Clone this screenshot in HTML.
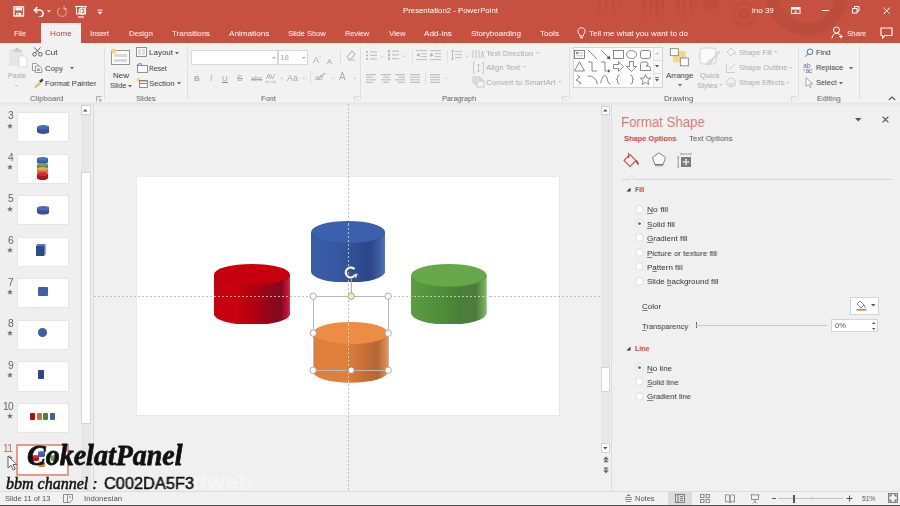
<!DOCTYPE html>
<html><head><meta charset="utf-8">
<style>
*{margin:0;padding:0;box-sizing:border-box}
html,body{width:900px;height:506px;overflow:hidden;background:#f0f0f0;font-family:"Liberation Sans",sans-serif}
.a{position:absolute}
.t{position:absolute;white-space:nowrap;will-change:transform;line-height:10px;font-size:8px;color:#444}
u{text-decoration-thickness:1px;text-underline-offset:1px;text-decoration-color:rgba(60,60,60,0.6)}
</style></head><body>

<div class="a" style="left:0;top:0;width:900px;height:43px;background:#c75140"></div>
<svg class="a" style="left:560px;top:0px;" width="340" height="43" viewBox="0 0 340 43">
<g fill="none" stroke="#000">
<circle cx="247" cy="-6" r="35" stroke-width="13" stroke-opacity="0.055"/>
<circle cx="184" cy="14" r="4" stroke-width="4" stroke-opacity="0.05"/>
<circle cx="184" cy="14" r="11" stroke-width="3" stroke-opacity="0.04"/>
</g>
<g fill="#000" fill-opacity="0.05">
<circle cx="151" cy="2" r="8"/>
<path d="M38 0 h3 l-1 20z M45 0 h2 l-0.5 16z M52 0 h3 l-1 22z M60 0 h2 l-0.6 14z"/>
<path d="M82 0 h4 l-1 26z M89 0 h3 l-1 22z M95 0 h4 l-1.5 24z M101 0 h3 l-1 18z"/>
<path d="M116 0 h4 l-1 20z M123 0 h3 l-1 24z M129 0 h4 l-1.2 16z M135 0 h2 l-0.5 12z"/>
</g>
</svg>
<svg class="a" style="left:13px;top:6px;" width="12" height="11" viewBox="0 0 12 11"><g fill="none" stroke="#fff" stroke-width="1.3"><rect x="1" y="0.8" width="9.5" height="9.2"/></g><rect x="2.5" y="1.5" width="6.5" height="3" fill="#fff"/><rect x="3.2" y="6.8" width="5" height="3" fill="#fff"/><rect x="4.5" y="7.8" width="1.2" height="1.5" fill="#c75140"/></svg>
<svg class="a" style="left:32px;top:5px;" width="20" height="12" viewBox="0 0 20 12"><g fill="none" stroke="#fff" stroke-width="1.5"><path d="M2.5 5 H7.5 a3.6 3.6 0 0 1 0 7.2 H6.5"/><path d="M5.3 2 L2.3 5 L5.3 8"/></g><path d="M15 5.3 h4 l-2 2.3z" fill="#fff"/></svg>
<svg class="a" style="left:56px;top:5px;" width="12" height="13" viewBox="0 0 12 13"><g fill="none" stroke="#fff" stroke-opacity="0.35" stroke-width="1.4"><path d="M8 3 a4.5 4.5 0 1 1 -4 0"/><path d="M8 1 v3 h3"/></g></svg>
<svg class="a" style="left:74px;top:5px;" width="14" height="13" viewBox="0 0 14 13"><g fill="none" stroke="#fff" stroke-width="1.1"><path d="M1 1.5 H13"/><path d="M2.5 1.5 V9 H11.5 V1.5"/><circle cx="8" cy="6" r="3"/><path d="M4 12 h6"/><path d="M7 4.5 l2 1.5 -2 1.5z" fill="#fff"/></g></svg>
<svg class="a" style="left:96.5px;top:8.5px;" width="6" height="6" viewBox="0 0 6 6"><path d="M0.5 1 h5" stroke="#fff" stroke-width="0.9"/><path d="M0.5 2.8 h5 l-2.5 2.6z" fill="#fff"/></svg>
<div class="t" style="left:402.50px;top:6.1px;font-size:7.8px;color:#ffffff;transform:scaleX(0.996);transform-origin:0 0;">Presentation2 - PowerPoint</div>
<div class="t" style="left:752.00px;top:5.7px;font-size:8px;color:#ffffff;transform:scaleX(0.986);transform-origin:0 0;">ino 39</div>
<svg class="a" style="left:790.5px;top:6.5px;" width="10" height="7" viewBox="0 0 10 7"><rect x="0.5" y="0.5" width="8.5" height="6" fill="none" stroke="#fff" stroke-width="1"/><rect x="1" y="1" width="7.5" height="1.6" fill="#fff"/><path d="M3 5.5 h3.5 l-1.75 -2z" fill="#fff"/></svg>
<svg class="a" style="left:821.8px;top:9.5px;" width="8" height="2" viewBox="0 0 8 2"><rect x="0" y="0" width="7" height="1" fill="#fff"/></svg>
<svg class="a" style="left:852px;top:6px;" width="8" height="8" viewBox="0 0 8 8"><g fill="none" stroke="#fff" stroke-width="1"><rect x="0.5" y="2.5" width="4.5" height="4.5"/><path d="M2.5 2.5 V0.5 H7 V5 H5"/></g></svg>
<svg class="a" style="left:882.5px;top:6.5px;" width="8" height="8" viewBox="0 0 8 8"><g stroke="#fff" stroke-width="1"><path d="M0.5 0.5 L7 7 M7 0.5 L0.5 7"/></g></svg>
<div class="a" style="left:41px;top:23px;width:40px;height:20px;background:#f1f1f1"></div>
<div class="t" style="left:14.00px;top:28.5px;font-size:8px;color:#ffffff;transform:scaleX(0.930);transform-origin:0 0;">File</div>
<div class="t" style="left:90.00px;top:28.5px;font-size:8px;color:#ffffff;transform:scaleX(0.950);transform-origin:0 0;">Insert</div>
<div class="t" style="left:128.60px;top:28.5px;font-size:8px;color:#ffffff;transform:scaleX(0.940);transform-origin:0 0;">Design</div>
<div class="t" style="left:171.70px;top:28.5px;font-size:8px;color:#ffffff;transform:scaleX(0.979);transform-origin:0 0;">Transitions</div>
<div class="t" style="left:228.60px;top:28.5px;font-size:8px;color:#ffffff;transform:scaleX(1.018);transform-origin:0 0;">Animations</div>
<div class="t" style="left:288.00px;top:28.5px;font-size:8px;color:#ffffff;transform:scaleX(0.944);transform-origin:0 0;">Slide Show</div>
<div class="t" style="left:345.00px;top:28.5px;font-size:8px;color:#ffffff;transform:scaleX(0.914);transform-origin:0 0;">Review</div>
<div class="t" style="left:388.60px;top:28.5px;font-size:8px;color:#ffffff;transform:scaleX(0.952);transform-origin:0 0;">View</div>
<div class="t" style="left:424.00px;top:28.5px;font-size:8px;color:#ffffff;transform:scaleX(1.032);transform-origin:0 0;">Add-ins</div>
<div class="t" style="left:470.50px;top:28.5px;font-size:8px;color:#ffffff;transform:scaleX(1.004);transform-origin:0 0;">Storyboarding</div>
<div class="t" style="left:540.00px;top:28.5px;font-size:8px;color:#ffffff;transform:scaleX(1.017);transform-origin:0 0;">Tools</div>
<div class="t" style="left:49.60px;top:28.5px;font-size:8px;color:#9c4a42;transform:scaleX(1.017);transform-origin:0 0;">Home</div>
<svg class="a" style="left:577px;top:27px;" width="9" height="12" viewBox="0 0 9 12"><g fill="none" stroke="#fff" stroke-width="1"><path d="M2.5 7.5 C0 5 0.5 0.8 4.5 0.8 C8.5 0.8 9 5 6.5 7.5 V9 H2.5z"/><path d="M3 10.8 h3"/></g></svg>
<div class="t" style="left:589.40px;top:28.5px;font-size:8px;color:#ffffff;transform:scaleX(1.003);transform-origin:0 0;">Tell me what you want to do</div>
<svg class="a" style="left:831px;top:26px;" width="13" height="13" viewBox="0 0 13 13"><g fill="none" stroke="#fff" stroke-width="1"><circle cx="5.5" cy="4" r="3"/><path d="M1 12.5 a4.8 4.8 0 0 1 8 -4"/><path d="M10 8.5 v4 M8 10.5 h4"/></g></svg>
<div class="t" style="left:847.00px;top:28.5px;font-size:8px;color:#ffffff;transform:scaleX(0.890);transform-origin:0 0;">Share</div>
<svg class="a" style="left:880px;top:27px;" width="13" height="12" viewBox="0 0 13 12"><path d="M1 1 H12 V8.5 H5 L2.5 11 V8.5 H1z" fill="none" stroke="#fff" stroke-width="1.1"/></svg>
<div class="a" style="left:0;top:43px;width:900px;height:61px;background:linear-gradient(to bottom,#f2f2f2 0,#f2f2f2 58.5px,#e6e6e6 60.5px,#e9e9e9 61px)"></div>
<div class="a" style="left:104px;top:47px;width:1px;height:53px;background:#e0e0e0"></div>
<div class="a" style="left:187px;top:47px;width:1px;height:53px;background:#e0e0e0"></div>
<div class="a" style="left:360px;top:47px;width:1px;height:53px;background:#e0e0e0"></div>
<div class="a" style="left:569px;top:47px;width:1px;height:53px;background:#e0e0e0"></div>
<div class="a" style="left:798px;top:47px;width:1px;height:53px;background:#e0e0e0"></div>
<div class="a" style="left:859px;top:47px;width:1px;height:53px;background:#e0e0e0"></div>
<svg class="a" style="left:8px;top:47px;" width="20" height="21" viewBox="0 0 20 21"><rect x="1" y="3" width="14" height="16" fill="#e6e6e6"/><path d="M4.5 4.5 H13.5 V2.8 H10.5 V1 H7.5 V2.8 H4.5z" fill="#c8c8c8"/><path d="M11 9 H16.5 L19 11.5 V20 H11z" fill="#fcfcfc" stroke="#d0d0d0" stroke-width="0.7"/></svg>
<div class="t" style="left:7.80px;top:71.0px;font-size:8px;color:#aaaaaa;transform:scaleX(0.890);transform-origin:0 0;">Paste</div>
<div class="a" style="left:15px;top:85px;width:3px;height:1px;background:#c8c8c8"></div>
<svg class="a" style="left:32px;top:47px;" width="11" height="10" viewBox="0 0 11 10"><g fill="none" stroke="#555" stroke-width="0.9"><circle cx="2.5" cy="7.3" r="1.8"/><circle cx="8.3" cy="7.3" r="1.8"/><path d="M3.5 5.8 L8.5 0.5 M7.3 5.8 L2.3 0.5"/></g></svg>
<div class="t" style="left:44.90px;top:48.2px;font-size:8px;color:#383838;transform:scaleX(1.013);transform-origin:0 0;">Cut</div>
<svg class="a" style="left:32px;top:62.5px;" width="11" height="10" viewBox="0 0 11 10"><g fill="#fafafa" stroke="#777" stroke-width="0.7"><path d="M0.5 0.5 H4.5 L6 2 V7.5 H0.5z"/><path d="M3.5 3 H7.5 L9.8 5.3 V9.5 H3.5z"/></g><rect x="5" y="5.5" width="3" height="2.5" fill="#9ab"/></svg>
<div class="t" style="left:45.00px;top:63.8px;font-size:8px;color:#383838;transform:scaleX(0.964);transform-origin:0 0;">Copy</div>
<svg class="a" style="left:69.5px;top:67px;" width="5" height="3" viewBox="0 0 5 3"><path d="M0 0 h4 l-2 2.5z" fill="#666"/></svg>
<svg class="a" style="left:33px;top:78px;" width="11" height="10" viewBox="0 0 11 10"><path d="M1 9 L6 4 L8 6 L3 10z" fill="#e0c070"/><path d="M6 3 L9 0.5 L10.5 2 L8 5z" fill="#444"/></svg>
<div class="t" style="left:45.00px;top:78.5px;font-size:8px;color:#383838;transform:scaleX(0.970);transform-origin:0 0;">Format Painter</div>
<div class="t" style="left:30.00px;top:93.8px;font-size:8px;color:#5e5e5e;transform:scaleX(0.970);transform-origin:0 0;">Clipboard</div>
<svg class="a" style="left:96px;top:96px;" width="6" height="6" viewBox="0 0 6 6"><g fill="none" stroke="#888" stroke-width="0.7"><path d="M0.5 5.5 V0.5 H5.5"/><path d="M2 2 L5 5 M5 3 V5 H3"/></g></svg>
<svg class="a" style="left:110px;top:48px;" width="21" height="18" viewBox="0 0 21 18"><rect x="1.5" y="2.5" width="18" height="14" fill="#fbfbfb" stroke="#8a8a8a" stroke-width="0.9"/><rect x="4" y="6" width="13" height="3" fill="#d8d8d8"/><rect x="4" y="11" width="13" height="3" fill="#d8d8d8"/><circle cx="4" cy="3" r="2.6" fill="#f2d77a"/></svg>
<div class="t" style="left:112.60px;top:70.5px;font-size:8px;color:#383838;transform:scaleX(1.011);transform-origin:0 0;">New</div>
<div class="t" style="left:109.90px;top:81.1px;font-size:8px;color:#383838;transform:scaleX(0.934);transform-origin:0 0;">Slide</div>
<svg class="a" style="left:128px;top:85px;" width="5" height="3" viewBox="0 0 5 3"><path d="M0 0 h4 l-2 2.5z" fill="#666"/></svg>
<svg class="a" style="left:136px;top:47px;" width="11" height="10" viewBox="0 0 11 10"><rect x="0.5" y="0.5" width="10" height="9" fill="#fafafa" stroke="#777" stroke-width="0.8"/><rect x="2" y="2" width="3" height="6" fill="#ddd"/><rect x="6" y="2" width="3" height="6" fill="#ddd"/></svg>
<div class="t" style="left:149.30px;top:48.2px;font-size:8px;color:#383838;transform:scaleX(0.987);transform-origin:0 0;">Layout</div>
<svg class="a" style="left:175px;top:51.5px;" width="5" height="3" viewBox="0 0 5 3"><path d="M0 0 h4 l-2 2.5z" fill="#666"/></svg>
<svg class="a" style="left:136px;top:63px;" width="12" height="10" viewBox="0 0 12 10"><rect x="1.5" y="2.5" width="10" height="7" fill="#fafafa" stroke="#777" stroke-width="0.8"/><path d="M1 3 a3 3 0 0 1 5 -1.5" fill="none" stroke="#3c78c8" stroke-width="1"/></svg>
<div class="t" style="left:149.30px;top:63.8px;font-size:8px;color:#383838;transform:scaleX(0.847);transform-origin:0 0;">Reset</div>
<svg class="a" style="left:136px;top:78px;" width="12" height="10" viewBox="0 0 12 10"><circle cx="2.5" cy="2" r="2" fill="#f0d890"/><rect x="3.5" y="2.5" width="8" height="3" fill="#fafafa" stroke="#777" stroke-width="0.8"/><rect x="3.5" y="5.5" width="8" height="4" fill="#fafafa" stroke="#777" stroke-width="0.8"/><path d="M3.5 3 h8" stroke="#c05040" stroke-width="0.8"/></svg>
<div class="t" style="left:149.30px;top:78.5px;font-size:8px;color:#383838;transform:scaleX(0.960);transform-origin:0 0;">Section</div>
<svg class="a" style="left:177px;top:81.5px;" width="5" height="3" viewBox="0 0 5 3"><path d="M0 0 h4 l-2 2.5z" fill="#666"/></svg>
<div class="t" style="left:136.00px;top:93.5px;font-size:8px;color:#5e5e5e;transform:scaleX(0.900);transform-origin:0 0;">Slides</div>
<div class="a" style="left:190.5px;top:50.4px;width:87px;height:15px;background:#fff;border:1px solid #d8d8d8"></div>
<div class="a" style="left:277.5px;top:50.4px;width:30px;height:15px;background:#fff;border:1px solid #d8d8d8"></div>
<svg class="a" style="left:272px;top:56.5px;" width="4" height="3" viewBox="0 0 4 3"><path d="M0 0 h3.5 l-1.75 2z" fill="#aaa"/></svg>
<svg class="a" style="left:302px;top:56.5px;" width="4" height="3" viewBox="0 0 4 3"><path d="M0 0 h3.5 l-1.75 2z" fill="#aaa"/></svg>
<div class="t" style="left:279.60px;top:53.3px;font-size:8px;color:#aaaaaa;">18</div>
<div class="t" style="left:313.00px;top:52.9px;font-size:9px;color:#aaaaaa;">A<sup style='font-size:4px'>^</sup></div>
<div class="t" style="left:327.40px;top:54.3px;font-size:7.5px;color:#aaaaaa;">A<sup style='font-size:4px'>ˇ</sup></div>
<div class="a" style="left:340px;top:50px;width:1px;height:14px;background:#e0e0e0"></div>
<svg class="a" style="left:346px;top:50px;" width="10" height="11" viewBox="0 0 10 11"><g fill="none" stroke="#c4c4c4" stroke-width="1.2"><path d="M1 7 L6 1 L9 4 L4 10z"/><path d="M2 10 H9"/></g></svg>
<div class="t" style="left:193.50px;top:73.5px;font-size:8px;color:#aaaaaa;font-weight:bold;">B</div>
<div class="t" style="left:209.50px;top:73.2px;font-size:8.5px;color:#aaaaaa;"><i>I</i></div>
<div class="t" style="left:221.80px;top:73.5px;font-size:8px;color:#aaaaaa;"><u>U</u></div>
<div class="t" style="left:236.80px;top:73.2px;font-size:8.5px;color:#aaaaaa;"><u style='text-decoration:line-through'>S</u></div>
<div class="t" style="left:250.50px;top:74.1px;font-size:7px;color:#aaaaaa;text-decoration:line-through">abc</div>
<div class="t" style="left:265.50px;top:72.3px;font-size:7.5px;color:#aaaaaa;letter-spacing:-0.5px">AV</div>
<svg class="a" style="left:265px;top:80px;" width="11" height="4" viewBox="0 0 11 4"><path d="M0.5 2 h10 M0.5 2 l2 -1.5 M0.5 2 l2 1.5 M10.5 2 l-2 -1.5 M10.5 2 l-2 1.5" stroke="#bbb" stroke-width="0.7" fill="none"/></svg>
<svg class="a" style="left:279.5px;top:77.0px;" width="4" height="3" viewBox="0 0 4 3"><path d="M0.3 0.5 L2 2.2 L3.7 0.5" fill="none" stroke="#c4c4c4" stroke-width="0.8"/></svg>
<div class="t" style="left:287.00px;top:72.9px;font-size:9px;color:#aaaaaa;">Aa</div>
<svg class="a" style="left:301.5px;top:77.0px;" width="4" height="3" viewBox="0 0 4 3"><path d="M0.3 0.5 L2 2.2 L3.7 0.5" fill="none" stroke="#c4c4c4" stroke-width="0.8"/></svg>
<div class="a" style="left:310px;top:71px;width:1px;height:14px;background:#e0e0e0"></div>
<div class="t" style="left:315.00px;top:73.1px;font-size:7px;color:#aaaaaa;"><i>ab</i></div>
<svg class="a" style="left:315px;top:72px;" width="11" height="10" viewBox="0 0 11 10"><path d="M2 8 L10 1" stroke="#bbb" stroke-width="1.5"/></svg>
<svg class="a" style="left:330.5px;top:77.0px;" width="4" height="3" viewBox="0 0 4 3"><path d="M0.3 0.5 L2 2.2 L3.7 0.5" fill="none" stroke="#c4c4c4" stroke-width="0.8"/></svg>
<div class="t" style="left:339.40px;top:72.2px;font-size:10px;color:#aaaaaa;">A</div>
<svg class="a" style="left:353.0px;top:77.0px;" width="4" height="3" viewBox="0 0 4 3"><path d="M0.3 0.5 L2 2.2 L3.7 0.5" fill="none" stroke="#c4c4c4" stroke-width="0.8"/></svg>
<div class="t" style="left:261.00px;top:93.9px;font-size:8px;color:#5e5e5e;transform:scaleX(0.938);transform-origin:0 0;">Font</div>
<svg class="a" style="left:354px;top:96px;" width="6" height="6" viewBox="0 0 6 6"><g fill="none" stroke="#cfcfcf" stroke-width="0.7"><path d="M0.5 5.5 V0.5 H5.5"/><path d="M2 2 L5 5"/></g></svg>
<svg class="a" style="left:366px;top:51px;" width="11" height="10" viewBox="0 0 11 10"><rect x="0" y="0.0" width="2" height="1.8" fill="#bbb"/><rect x="4" y="0.3" width="7" height="1.2" fill="#c4c4c4"/><rect x="0" y="3.5" width="2" height="1.8" fill="#bbb"/><rect x="4" y="3.8" width="7" height="1.2" fill="#c4c4c4"/><rect x="0" y="7.0" width="2" height="1.8" fill="#bbb"/><rect x="4" y="7.3" width="7" height="1.2" fill="#c4c4c4"/></svg>
<svg class="a" style="left:380.0px;top:55.0px;" width="4" height="3" viewBox="0 0 4 3"><path d="M0.3 0.5 L2 2.2 L3.7 0.5" fill="none" stroke="#c4c4c4" stroke-width="0.8"/></svg>
<svg class="a" style="left:388px;top:50px;" width="11" height="11" viewBox="0 0 11 11"><rect x="0" y="0.0" width="2" height="2.5" fill="#bbb"/><rect x="4" y="0.6" width="7" height="1.2" fill="#c4c4c4"/><rect x="0" y="3.7" width="2" height="2.5" fill="#bbb"/><rect x="4" y="4.3" width="7" height="1.2" fill="#c4c4c4"/><rect x="0" y="7.4" width="2" height="2.5" fill="#bbb"/><rect x="4" y="8.0" width="7" height="1.2" fill="#c4c4c4"/></svg>
<svg class="a" style="left:402.0px;top:55.0px;" width="4" height="3" viewBox="0 0 4 3"><path d="M0.3 0.5 L2 2.2 L3.7 0.5" fill="none" stroke="#c4c4c4" stroke-width="0.8"/></svg>
<div class="a" style="left:411.7px;top:50px;width:1px;height:13px;background:#e0e0e0"></div>
<svg class="a" style="left:416px;top:50px;" width="12" height="11" viewBox="0 0 12 11"><g fill="#c4c4c4"><rect x="0" y="0" width="11" height="1.1"/><rect x="5" y="3" width="6" height="1.1"/><rect x="5" y="6" width="6" height="1.1"/><rect x="0" y="9" width="11" height="1.1"/><path d="M0.5 5 L3.5 3 V7z" fill="#aaa"/></g></svg>
<svg class="a" style="left:430px;top:50px;" width="12" height="11" viewBox="0 0 12 11"><g fill="#c4c4c4"><rect x="0" y="0" width="11" height="1.1"/><rect x="5" y="3" width="6" height="1.1"/><rect x="5" y="6" width="6" height="1.1"/><rect x="0" y="9" width="11" height="1.1"/><path d="M3.5 5 L0.5 3 V7z" fill="#aaa"/></g></svg>
<div class="a" style="left:446.7px;top:50px;width:1px;height:13px;background:#e0e0e0"></div>
<svg class="a" style="left:451px;top:49px;" width="11" height="12" viewBox="0 0 11 12"><g fill="#c4c4c4"><rect x="4" y="2" width="7" height="1.1"/><rect x="4" y="5" width="7" height="1.1"/><rect x="4" y="8" width="7" height="1.1"/></g><g stroke="#aaa" stroke-width="0.8" fill="none"><path d="M1.5 1 V11 M0 2.5 L1.5 1 L3 2.5 M0 9.5 L1.5 11 L3 9.5"/></g></svg>
<svg class="a" style="left:465.0px;top:55.0px;" width="4" height="3" viewBox="0 0 4 3"><path d="M0.3 0.5 L2 2.2 L3.7 0.5" fill="none" stroke="#c4c4c4" stroke-width="0.8"/></svg>
<svg class="a" style="left:366px;top:74px;" width="10" height="10.4" viewBox="0 0 10 10.4"><rect x="0" y="0.0" width="10" height="1.2" fill="#c0c0c0"/><rect x="0" y="2.6" width="7" height="1.2" fill="#c0c0c0"/><rect x="0" y="5.2" width="10" height="1.2" fill="#c0c0c0"/><rect x="0" y="7.800000000000001" width="7" height="1.2" fill="#c0c0c0"/></svg>
<svg class="a" style="left:380.7px;top:74px;" width="10" height="10.4" viewBox="0 0 10 10.4"><rect x="0" y="0.0" width="10" height="1.2" fill="#c0c0c0"/><rect x="2" y="2.6" width="6" height="1.2" fill="#c0c0c0"/><rect x="0" y="5.2" width="10" height="1.2" fill="#c0c0c0"/><rect x="2" y="7.800000000000001" width="6" height="1.2" fill="#c0c0c0"/></svg>
<svg class="a" style="left:395.3px;top:74px;" width="10" height="10.4" viewBox="0 0 10 10.4"><rect x="0" y="0.0" width="10" height="1.2" fill="#c0c0c0"/><rect x="3" y="2.6" width="7" height="1.2" fill="#c0c0c0"/><rect x="0" y="5.2" width="10" height="1.2" fill="#c0c0c0"/><rect x="3" y="7.800000000000001" width="7" height="1.2" fill="#c0c0c0"/></svg>
<svg class="a" style="left:410px;top:74px;" width="10" height="10.4" viewBox="0 0 10 10.4"><rect x="0" y="0.0" width="10" height="1.2" fill="#c0c0c0"/><rect x="0" y="2.6" width="10" height="1.2" fill="#c0c0c0"/><rect x="0" y="5.2" width="10" height="1.2" fill="#c0c0c0"/><rect x="0" y="7.800000000000001" width="10" height="1.2" fill="#c0c0c0"/></svg>
<div class="a" style="left:424.7px;top:71px;width:1px;height:14px;background:#e0e0e0"></div>
<svg class="a" style="left:429.6px;top:74px;" width="10" height="10.4" viewBox="0 0 10 10.4"><rect x="0" y="0.0" width="10" height="1.2" fill="#c0c0c0"/><rect x="0" y="2.6" width="10" height="1.2" fill="#c0c0c0"/><rect x="0" y="5.2" width="10" height="1.2" fill="#c0c0c0"/><rect x="0" y="7.800000000000001" width="10" height="1.2" fill="#c0c0c0"/></svg>
<svg class="a" style="left:443.5px;top:77.0px;" width="4" height="3" viewBox="0 0 4 3"><path d="M0.3 0.5 L2 2.2 L3.7 0.5" fill="none" stroke="#c4c4c4" stroke-width="0.8"/></svg>
<svg class="a" style="left:472px;top:47px;" width="13" height="12" viewBox="0 0 13 12"><g stroke="#bbb" stroke-width="0.9" fill="none"><path d="M1 3 V11 M4 3 V11 M7 3 V11"/><path d="M9 11 L10.5 4 L12 11"/></g></svg>
<div class="t" style="left:486.30px;top:48.5px;font-size:8px;color:#aaaaaa;transform:scaleX(0.974);transform-origin:0 0;">Text Direction</div>
<svg class="a" style="left:536px;top:51.5px;" width="4" height="3" viewBox="0 0 4 3"><path d="M0 0 h3.5 l-1.75 2z" fill="#ccc"/></svg>
<svg class="a" style="left:473px;top:62px;" width="11" height="12" viewBox="0 0 11 12"><g stroke="#bbb" stroke-width="0.8" fill="none"><path d="M2 0.5 H0.5 V11.5 H2 M9 0.5 H10.5 V11.5 H9"/><path d="M5.5 2 V10 M4 3.5 L5.5 2 L7 3.5 M4 8.5 L5.5 10 L7 8.5"/></g></svg>
<div class="t" style="left:486.30px;top:63.2px;font-size:8px;color:#aaaaaa;transform:scaleX(0.984);transform-origin:0 0;">Align Text</div>
<svg class="a" style="left:523px;top:66px;" width="4" height="3" viewBox="0 0 4 3"><path d="M0 0 h3.5 l-1.75 2z" fill="#ccc"/></svg>
<svg class="a" style="left:472px;top:76px;" width="13" height="12" viewBox="0 0 13 12"><g stroke="#bbb" stroke-width="0.8" fill="#f4f4f4"><rect x="1" y="1" width="7" height="5"/><rect x="3" y="3" width="7" height="5"/><rect x="5" y="5" width="7" height="6"/></g></svg>
<div class="t" style="left:486.30px;top:77.8px;font-size:8px;color:#aaaaaa;transform:scaleX(0.983);transform-origin:0 0;">Convert to SmartArt</div>
<svg class="a" style="left:558px;top:81px;" width="4" height="3" viewBox="0 0 4 3"><path d="M0 0 h3.5 l-1.75 2z" fill="#ccc"/></svg>
<div class="t" style="left:441.80px;top:94.2px;font-size:8px;color:#5e5e5e;transform:scaleX(0.915);transform-origin:0 0;">Paragraph</div>
<svg class="a" style="left:562px;top:96px;" width="6" height="6" viewBox="0 0 6 6"><g fill="none" stroke="#cfcfcf" stroke-width="0.7"><path d="M0.5 5.5 V0.5 H5.5"/><path d="M2 2 L5 5"/></g></svg>
<div class="a" style="left:572.5px;top:47.3px;width:90px;height:40.8px;background:#fff;border:1px solid #d4d4d4"></div>
<div class="a" style="left:653px;top:48px;width:9px;height:39px;background:#f6f6f6;border-left:1px solid #e6e6e6"></div>
<div class="a" style="left:653px;top:60px;width:9px;height:1px;background:#e0e0e0"></div><div class="a" style="left:653px;top:73px;width:9px;height:1px;background:#e0e0e0"></div>
<svg class="a" style="left:655px;top:65px;" width="5" height="3" viewBox="0 0 5 3"><path d="M0 0 h4 l-2 2.5z" fill="#555"/></svg>
<svg class="a" style="left:655px;top:77px;" width="5" height="6" viewBox="0 0 5 6"><path d="M0 0.5 h4" stroke="#555" stroke-width="0.8"/><path d="M0 2 h4 l-2 2.5z" fill="#555"/></svg>
<svg class="a" style="left:655px;top:52px;" width="5" height="3" viewBox="0 0 5 3"><path d="M0 2.5 h4 l-2 -2.5z" fill="#ccc"/></svg>
<svg class="a" style="left:573.7px;top:48.5px;" width="11" height="12" viewBox="0 0 11 12"><rect x="0.5" y="1.5" width="10" height="8" fill="none" stroke="#606060" stroke-width="0.75"/><rect x="2" y="3" width="2.5" height="2" fill="#888"/><path d="M5.5 4 h3.5 M2 6.8 h7" stroke="#999" stroke-width="0.6"/></svg>
<svg class="a" style="left:587.1px;top:48.5px;" width="11" height="12" viewBox="0 0 11 12"><path d="M1 1 L10 10" fill="none" stroke="#606060" stroke-width="0.75"/></svg>
<svg class="a" style="left:600.0px;top:48.5px;" width="11" height="12" viewBox="0 0 11 12"><path d="M1 1 L10 10" fill="none" stroke="#606060" stroke-width="0.75"/><path d="M10.5 10.5 L6.5 9.5 L9.5 6.5z" fill="#555"/></svg>
<svg class="a" style="left:612.8px;top:48.5px;" width="11" height="12" viewBox="0 0 11 12"><rect x="0.5" y="1.5" width="10" height="8" fill="none" stroke="#606060" stroke-width="0.75"/></svg>
<svg class="a" style="left:626.2px;top:48.5px;" width="11" height="12" viewBox="0 0 11 12"><ellipse cx="5.5" cy="5.5" rx="5" ry="4" fill="none" stroke="#606060" stroke-width="0.75"/></svg>
<svg class="a" style="left:639.5px;top:48.5px;" width="11" height="12" viewBox="0 0 11 12"><rect x="0.5" y="1.5" width="10" height="8" rx="2" fill="none" stroke="#606060" stroke-width="0.75"/></svg>
<svg class="a" style="left:573.7px;top:61.400000000000006px;" width="11" height="12" viewBox="0 0 11 12"><path d="M5.5 0.8 L10.5 10 H0.5z" fill="none" stroke="#606060" stroke-width="0.75"/></svg>
<svg class="a" style="left:587.1px;top:61.400000000000006px;" width="11" height="12" viewBox="0 0 11 12"><path d="M1 1 H5 V10 H10" fill="none" stroke="#606060" stroke-width="0.75"/></svg>
<svg class="a" style="left:600.0px;top:61.400000000000006px;" width="11" height="12" viewBox="0 0 11 12"><path d="M1 1 H5 V10 H9" fill="none" stroke="#606060" stroke-width="0.75"/><path d="M10.5 10 L8 8.3 V11.7z" fill="#555"/></svg>
<svg class="a" style="left:612.8px;top:61.400000000000006px;" width="11" height="12" viewBox="0 0 11 12"><path d="M0.5 3.5 H5.5 V0.8 L10.5 5.5 L5.5 10.2 V7.5 H0.5z" fill="none" stroke="#606060" stroke-width="0.75"/></svg>
<svg class="a" style="left:626.2px;top:61.400000000000006px;" width="11" height="12" viewBox="0 0 11 12"><path d="M3.5 0.5 H7.5 V5.5 H10.5 L5.5 10.5 L0.5 5.5 H3.5z" fill="none" stroke="#606060" stroke-width="0.75"/></svg>
<svg class="a" style="left:639.5px;top:61.400000000000006px;" width="11" height="12" viewBox="0 0 11 12"><path d="M0.5 9.5 V3.5 a2.5 2.5 0 0 1 2.5 -2.5 H6 a2 2 0 0 1 0 4 H8 a2.5 2.5 0 0 1 2.5 2.5 V9.5z" fill="none" stroke="#606060" stroke-width="0.75"/></svg>
<svg class="a" style="left:573.7px;top:74.2px;" width="11" height="12" viewBox="0 0 11 12"><path d="M3 1 L6 3 L2 6 L7 9 L5 10.5" fill="none" stroke="#606060" stroke-width="0.75"/></svg>
<svg class="a" style="left:587.1px;top:74.2px;" width="11" height="12" viewBox="0 0 11 12"><path d="M0.5 2 Q8 1 10.5 10" fill="none" stroke="#606060" stroke-width="0.75"/></svg>
<svg class="a" style="left:600.0px;top:74.2px;" width="11" height="12" viewBox="0 0 11 12"><path d="M0.5 9 Q2.5 1 5 1.5 Q7 2 7.5 6 Q8 10 10.5 10" fill="none" stroke="#606060" stroke-width="0.75"/></svg>
<svg class="a" style="left:612.8px;top:74.2px;" width="11" height="12" viewBox="0 0 11 12"><path d="M6.5 1 Q4.5 1 4.5 3.5 V4.5 Q4.5 5.5 3.5 5.5 Q4.5 5.5 4.5 6.5 V8 Q4.5 10 6.5 10" fill="none" stroke="#606060" stroke-width="0.75"/></svg>
<svg class="a" style="left:626.2px;top:74.2px;" width="11" height="12" viewBox="0 0 11 12"><path d="M4.5 1 Q6.5 1 6.5 3.5 V4.5 Q6.5 5.5 7.5 5.5 Q6.5 5.5 6.5 6.5 V8 Q6.5 10 4.5 10" fill="none" stroke="#606060" stroke-width="0.75"/></svg>
<svg class="a" style="left:639.5px;top:74.2px;" width="11" height="12" viewBox="0 0 11 12"><path d="M5.5 0.5 L7 4 L10.7 4.2 L7.9 6.6 L8.8 10.4 L5.5 8.4 L2.2 10.4 L3.1 6.6 L0.3 4.2 L4 4z" fill="none" stroke="#606060" stroke-width="0.75"/></svg>
<svg class="a" style="left:669px;top:47px;" width="21" height="20" viewBox="0 0 21 20"><rect x="4" y="4" width="12.7" height="11.3" fill="#f2d88e"/><rect x="1.3" y="1.7" width="8" height="7" fill="#fff" stroke="#777" stroke-width="0.8"/><rect x="11.3" y="11" width="8" height="7.8" fill="#fff" stroke="#777" stroke-width="0.8"/></svg>
<div class="t" style="left:666.00px;top:70.7px;font-size:8px;color:#383838;transform:scaleX(0.963);transform-origin:0 0;">Arrange</div>
<svg class="a" style="left:678px;top:84px;" width="5" height="3" viewBox="0 0 5 3"><path d="M0 0 h4 l-2 2.5z" fill="#666"/></svg>
<svg class="a" style="left:699px;top:47px;" width="22" height="21" viewBox="0 0 22 21"><rect x="1" y="1" width="16" height="16" rx="3" fill="#fafafa" stroke="#d0d0d0" stroke-width="1"/><path d="M8 17 Q10 12 13 12 L20 4 L21 5 L14 13 Q14 16 9 18z" fill="#ddd" stroke="#c8c8c8" stroke-width="0.6"/></svg>
<div class="t" style="left:700.00px;top:70.7px;font-size:8px;color:#aaaaaa;transform:scaleX(0.963);transform-origin:0 0;">Quick</div>
<div class="t" style="left:696.50px;top:81.1px;font-size:8px;color:#aaaaaa;transform:scaleX(0.941);transform-origin:0 0;">Styles</div>
<svg class="a" style="left:719px;top:84px;" width="4" height="3" viewBox="0 0 4 3"><path d="M0 0 h3.5 l-1.75 2z" fill="#ccc"/></svg>
<div class="t" style="left:663.70px;top:94.0px;font-size:8px;color:#5e5e5e;transform:scaleX(0.999);transform-origin:0 0;">Drawing</div>
<svg class="a" style="left:726px;top:47px;" width="11" height="10" viewBox="0 0 11 10"><g fill="none" stroke="#c8c8c8" stroke-width="0.9"><path d="M1 5 L5 1 L9 5 L5 9z"/><path d="M9 5 q1.5 2 0 3"/></g></svg>
<div class="t" style="left:738.60px;top:47.8px;font-size:8px;color:#aaaaaa;transform:scaleX(0.925);transform-origin:0 0;">Shape Fill</div>
<svg class="a" style="left:774px;top:51px;" width="4" height="3" viewBox="0 0 4 3"><path d="M0 0 h3.5 l-1.75 2z" fill="#ccc"/></svg>
<svg class="a" style="left:726px;top:62px;" width="11" height="11" viewBox="0 0 11 11"><g fill="none" stroke="#c8c8c8" stroke-width="0.9"><path d="M0.5 2 V10.5 H9"/><path d="M3 8 L9.5 1.5"/></g></svg>
<div class="t" style="left:738.60px;top:63.2px;font-size:8px;color:#aaaaaa;transform:scaleX(0.955);transform-origin:0 0;">Shape Outline</div>
<svg class="a" style="left:789px;top:66.5px;" width="4" height="3" viewBox="0 0 4 3"><path d="M0 0 h3.5 l-1.75 2z" fill="#ccc"/></svg>
<svg class="a" style="left:726px;top:77px;" width="11" height="11" viewBox="0 0 11 11"><circle cx="5" cy="5.5" r="4.3" fill="#f2f2f2" stroke="#c8c8c8" stroke-width="0.9"/><ellipse cx="6" cy="7.5" rx="4" ry="2" fill="#ddd"/></svg>
<div class="t" style="left:738.60px;top:78.2px;font-size:8px;color:#aaaaaa;transform:scaleX(0.912);transform-origin:0 0;">Shape Effects</div>
<svg class="a" style="left:786px;top:81.5px;" width="4" height="3" viewBox="0 0 4 3"><path d="M0 0 h3.5 l-1.75 2z" fill="#ccc"/></svg>
<svg class="a" style="left:791px;top:96px;" width="6" height="6" viewBox="0 0 6 6"><g fill="none" stroke="#cfcfcf" stroke-width="0.7"><path d="M0.5 5.5 V0.5 H5.5"/><path d="M2 2 L5 5"/></g></svg>
<svg class="a" style="left:804px;top:48px;" width="10" height="10" viewBox="0 0 10 10"><g fill="none" stroke="#4a6fa0" stroke-width="1"><circle cx="6" cy="3.8" r="2.8"/><path d="M4 5.8 L1 8.8"/></g></svg>
<div class="t" style="left:816.30px;top:47.8px;font-size:8px;color:#383838;transform:scaleX(0.945);transform-origin:0 0;">Find</div>
<svg class="a" style="left:803px;top:61.5px;" width="12" height="12" viewBox="0 0 12 12"><text x="0.3" y="5.5" font-size="6.5" fill="#6a6a9a" font-family="Liberation Sans">ab</text><text x="2.5" y="11.3" font-size="6.5" fill="#6a6a9a" font-family="Liberation Sans">ac</text><path d="M0.5 7.5 l1.3 1" stroke="#556" stroke-width="0.8"/></svg>
<div class="t" style="left:816.30px;top:63.2px;font-size:8px;color:#383838;transform:scaleX(0.926);transform-origin:0 0;">Replace</div>
<svg class="a" style="left:849px;top:66.5px;" width="5" height="3" viewBox="0 0 5 3"><path d="M0 0 h4 l-2 2.5z" fill="#666"/></svg>
<svg class="a" style="left:805px;top:77px;" width="9" height="11" viewBox="0 0 9 11"><path d="M1 0.8 V9.5 L3.3 7.3 L5 10.5 L6.3 9.8 L4.8 6.8 H7.8z" fill="#fff" stroke="#888" stroke-width="0.7"/></svg>
<div class="t" style="left:816.30px;top:78.2px;font-size:8px;color:#383838;transform:scaleX(0.931);transform-origin:0 0;">Select</div>
<svg class="a" style="left:838.5px;top:81.5px;" width="5" height="3" viewBox="0 0 5 3"><path d="M0 0 h4 l-2 2.5z" fill="#666"/></svg>
<div class="t" style="left:817.00px;top:93.7px;font-size:8px;color:#5e5e5e;transform:scaleX(0.973);transform-origin:0 0;">Editing</div>
<svg class="a" style="left:888px;top:95.5px;" width="8" height="5" viewBox="0 0 8 5"><path d="M0.8 4 L4 1 L7.2 4" fill="none" stroke="#555" stroke-width="1.1"/></svg>
<div class="a" style="left:0;top:104px;width:93px;height:387px;background:#efefef"></div>
<div class="a" style="left:81px;top:104px;width:9.5px;height:387px;background:#e7e7e7"></div>
<div class="a" style="left:93px;top:104px;width:1px;height:387px;background:#d9d9d9"></div>
<div class="a" style="left:94px;top:104px;width:517px;height:387px;background:#f0f0f0"></div>
<div class="a" style="left:611px;top:104px;width:1px;height:387px;background:#dcdcdc"></div>
<div class="a" style="left:612px;top:104px;width:288px;height:387px;background:#f0f0f0"></div>
<div class="a" style="left:0;top:104px;width:900px;height:2px;background:linear-gradient(to bottom,rgba(0,0,0,0.035),rgba(0,0,0,0))"></div>
<div class="a" style="left:80.5px;top:105.3px;width:10px;height:10px;background:#fff;border:1px solid #d2d2d2"></div>
<svg class="a" style="left:83px;top:108.5px;" width="5" height="3" viewBox="0 0 5 3"><path d="M0 2.5 h4.5 l-2.25 -2.5z" fill="#555"/></svg>
<div class="a" style="left:81px;top:172.3px;width:9.5px;height:252px;background:#fff;border:1px solid #d6d6d6"></div>
<div class="a" style="left:17.6px;top:112.9px;width:50.3px;height:28.3px;background:#fff;box-shadow:0 0 0 0.6px #dedede"></div>
<div class="t" style="left:8px;top:111.3px;font-size:10.3px;line-height:10px;color:#666;letter-spacing:0">3</div>
<svg class="a" style="left:7.2px;top:122.5px;" width="6" height="6" viewBox="0 0 6 6"><path d="M3 0.2 L3.8 2.1 L5.9 2.2 L4.3 3.5 L4.8 5.7 L3 4.5 L1.2 5.7 L1.7 3.5 L0.1 2.2 L2.2 2.1z" fill="#777"/></svg>
<svg class="a" style="left:36.5px;top:124.9px" width="12.5" height="9" viewBox="0 0 12.5 9"><path d="M0 2.25 V6.75 A6.25 2.25 0 0 0 12.5 6.75 V2.25z" fill="#34539a"/><ellipse cx="6.25" cy="2.25" rx="6.25" ry="2.25" fill="#4a6cb8"/></svg>
<div class="a" style="left:17.6px;top:154.5px;width:50.3px;height:28.3px;background:#fff;box-shadow:0 0 0 0.6px #dedede"></div>
<div class="t" style="left:8px;top:152.9px;font-size:10.3px;line-height:10px;color:#666;letter-spacing:0">4</div>
<svg class="a" style="left:7.2px;top:164.06px;" width="6" height="6" viewBox="0 0 6 6"><path d="M3 0.2 L3.8 2.1 L5.9 2.2 L4.3 3.5 L4.8 5.7 L3 4.5 L1.2 5.7 L1.7 3.5 L0.1 2.2 L2.2 2.1z" fill="#777"/></svg>
<svg class="a" style="left:37px;top:157.46px" width="11" height="7" viewBox="0 0 11 7"><path d="M0 1.75 V5.25 A5.5 1.75 0 0 0 11 5.25 V1.75z" fill="#3b5ca6"/><ellipse cx="5.5" cy="1.75" rx="5.5" ry="1.75" fill="#5070b8"/></svg><svg class="a" style="left:37px;top:162.96px" width="11" height="6.5" viewBox="0 0 11 6.5"><path d="M0 1.625 V4.875 A5.5 1.625 0 0 0 11 4.875 V1.625z" fill="#4a8a3c"/><ellipse cx="5.5" cy="1.625" rx="5.5" ry="1.625" fill="#6aa84f"/></svg><svg class="a" style="left:37px;top:167.46px" width="11" height="6.5" viewBox="0 0 11 6.5"><path d="M0 1.625 V4.875 A5.5 1.625 0 0 0 11 4.875 V1.625z" fill="#d67a34"/><ellipse cx="5.5" cy="1.625" rx="5.5" ry="1.625" fill="#f0a060"/></svg><svg class="a" style="left:37px;top:171.96px" width="11" height="8" viewBox="0 0 11 8"><path d="M0 2.0 V6.0 A5.5 2.0 0 0 0 11 6.0 V2.0z" fill="#b8101c"/><ellipse cx="5.5" cy="2.0" rx="5.5" ry="2.0" fill="#d42a30"/></svg>
<div class="a" style="left:17.6px;top:196.0px;width:50.3px;height:28.3px;background:#fff;box-shadow:0 0 0 0.6px #dedede"></div>
<div class="t" style="left:8px;top:194.4px;font-size:10.3px;line-height:10px;color:#666;letter-spacing:0">5</div>
<svg class="a" style="left:7.2px;top:205.62px;" width="6" height="6" viewBox="0 0 6 6"><path d="M3 0.2 L3.8 2.1 L5.9 2.2 L4.3 3.5 L4.8 5.7 L3 4.5 L1.2 5.7 L1.7 3.5 L0.1 2.2 L2.2 2.1z" fill="#777"/></svg>
<svg class="a" style="left:36.5px;top:206.02px" width="12.5" height="8.5" viewBox="0 0 12.5 8.5"><path d="M0 2.125 V6.375 A6.25 2.125 0 0 0 12.5 6.375 V2.125z" fill="#34539a"/><ellipse cx="6.25" cy="2.125" rx="6.25" ry="2.125" fill="#4a6cb8"/></svg>
<div class="a" style="left:17.6px;top:237.6px;width:50.3px;height:28.3px;background:#fff;box-shadow:0 0 0 0.6px #dedede"></div>
<div class="t" style="left:8px;top:236.0px;font-size:10.3px;line-height:10px;color:#666;letter-spacing:0">6</div>
<svg class="a" style="left:7.2px;top:247.18px;" width="6" height="6" viewBox="0 0 6 6"><path d="M3 0.2 L3.8 2.1 L5.9 2.2 L4.3 3.5 L4.8 5.7 L3 4.5 L1.2 5.7 L1.7 3.5 L0.1 2.2 L2.2 2.1z" fill="#777"/></svg>
<svg class="a" style="left:36px;top:243.58px" width="9.5" height="12" viewBox="0 0 9.5 12"><path d="M0 2 L1.2 0 H9.5 L8.3 2z" fill="#5576c0"/><rect x="0" y="2" width="8.3" height="10" fill="#2f4a8c"/><path d="M8.3 2 L9.5 0 V10 L8.3 12z" fill="#3c5ca8"/></svg>
<div class="a" style="left:17.6px;top:279.1px;width:50.3px;height:28.3px;background:#fff;box-shadow:0 0 0 0.6px #dedede"></div>
<div class="t" style="left:8px;top:277.5px;font-size:10.3px;line-height:10px;color:#666;letter-spacing:0">7</div>
<svg class="a" style="left:7.2px;top:288.74px;" width="6" height="6" viewBox="0 0 6 6"><path d="M3 0.2 L3.8 2.1 L5.9 2.2 L4.3 3.5 L4.8 5.7 L3 4.5 L1.2 5.7 L1.7 3.5 L0.1 2.2 L2.2 2.1z" fill="#777"/></svg>
<div class="a" style="left:38px;top:286.74px;width:10px;height:9.5px;background:#3f5fa8;border-radius:1px;box-shadow:inset 0 0px 0 rgba(255,255,255,0.18)"></div>
<div class="a" style="left:17.6px;top:320.7px;width:50.3px;height:28.3px;background:#fff;box-shadow:0 0 0 0.6px #dedede"></div>
<div class="t" style="left:8px;top:319.1px;font-size:10.3px;line-height:10px;color:#666;letter-spacing:0">8</div>
<svg class="a" style="left:7.2px;top:330.30000000000007px;" width="6" height="6" viewBox="0 0 6 6"><path d="M3 0.2 L3.8 2.1 L5.9 2.2 L4.3 3.5 L4.8 5.7 L3 4.5 L1.2 5.7 L1.7 3.5 L0.1 2.2 L2.2 2.1z" fill="#777"/></svg>
<div class="a" style="left:38.1px;top:328.0px;width:9.3px;height:9px;border-radius:50%;background:#3f5fa8"></div>
<div class="a" style="left:17.6px;top:362.3px;width:50.3px;height:28.3px;background:#fff;box-shadow:0 0 0 0.6px #dedede"></div>
<div class="t" style="left:8px;top:360.7px;font-size:10.3px;line-height:10px;color:#666;letter-spacing:0">9</div>
<svg class="a" style="left:7.2px;top:371.86px;" width="6" height="6" viewBox="0 0 6 6"><path d="M3 0.2 L3.8 2.1 L5.9 2.2 L4.3 3.5 L4.8 5.7 L3 4.5 L1.2 5.7 L1.7 3.5 L0.1 2.2 L2.2 2.1z" fill="#777"/></svg>
<div class="a" style="left:38px;top:369.56px;width:5.5px;height:9.4px;background:#2f4585;border-radius:1px;box-shadow:inset 0 0px 0 rgba(255,255,255,0.18)"></div>
<div class="a" style="left:17.6px;top:403.8px;width:50.3px;height:28.3px;background:#fff;box-shadow:0 0 0 0.6px #dedede"></div>
<div class="t" style="left:3px;top:402.2px;font-size:10.3px;line-height:10px;color:#666;letter-spacing:-0.7px">10</div>
<svg class="a" style="left:7.2px;top:413.4200000000001px;" width="6" height="6" viewBox="0 0 6 6"><path d="M3 0.2 L3.8 2.1 L5.9 2.2 L4.3 3.5 L4.8 5.7 L3 4.5 L1.2 5.7 L1.7 3.5 L0.1 2.2 L2.2 2.1z" fill="#777"/></svg>
<div class="a" style="left:30px;top:412.82000000000005px;width:5px;height:7.5px;background:#a8101e;border-radius:1px;box-shadow:inset 0 0px 0 rgba(255,255,255,0.18)"></div><div class="a" style="left:36.5px;top:412.82000000000005px;width:5px;height:7.5px;background:#c07040;border-radius:1px;box-shadow:inset 0 0px 0 rgba(255,255,255,0.18)"></div><div class="a" style="left:43px;top:412.82000000000005px;width:5px;height:7.5px;background:#4f7f3f;border-radius:1px;box-shadow:inset 0 0px 0 rgba(255,255,255,0.18)"></div><div class="a" style="left:49.5px;top:412.82000000000005px;width:5px;height:7.5px;background:#3f5fa8;border-radius:1px;box-shadow:inset 0 0px 0 rgba(255,255,255,0.18)"></div>
<div class="a" style="left:16.2px;top:443.6px;width:53.3px;height:32px;background:#fff;border:2px solid #e69a8c"></div>
<div class="t" style="left:3px;top:443.8px;font-size:10.3px;line-height:10px;color:#c86a62;letter-spacing:-0.7px">11</div>
<svg class="a" style="left:7.2px;top:454.98px;" width="6" height="6" viewBox="0 0 6 6"><path d="M3 0.2 L3.8 2.1 L5.9 2.2 L4.3 3.5 L4.8 5.7 L3 4.5 L1.2 5.7 L1.7 3.5 L0.1 2.2 L2.2 2.1z" fill="#777"/></svg>
<svg class="a" style="left:38px;top:451.38px" width="7" height="6" viewBox="0 0 7 6"><path d="M0 1.5 V4.5 A3.5 1.5 0 0 0 7 4.5 V1.5z" fill="#3f5fa8"/><ellipse cx="3.5" cy="1.5" rx="3.5" ry="1.5" fill="#4a6cb8"/></svg><svg class="a" style="left:31.5px;top:455.38px" width="7" height="6" viewBox="0 0 7 6"><path d="M0 1.5 V4.5 A3.5 1.5 0 0 0 7 4.5 V1.5z" fill="#c4111d"/><ellipse cx="3.5" cy="1.5" rx="3.5" ry="1.5" fill="#d42a30"/></svg><svg class="a" style="left:51px;top:455.38px" width="7" height="6" viewBox="0 0 7 6"><path d="M0 1.5 V4.5 A3.5 1.5 0 0 0 7 4.5 V1.5z" fill="#5a9a44"/><ellipse cx="3.5" cy="1.5" rx="3.5" ry="1.5" fill="#6aa84f"/></svg><svg class="a" style="left:38px;top:461.38px" width="7" height="6" viewBox="0 0 7 6"><path d="M0 1.5 V4.5 A3.5 1.5 0 0 0 7 4.5 V1.5z" fill="#d88040"/><ellipse cx="3.5" cy="1.5" rx="3.5" ry="1.5" fill="#eb9050"/></svg>
<div class="a" style="left:600.5px;top:104px;width:9.8px;height:340px;background:#e7e7e7"></div>
<div class="a" style="left:600.5px;top:105.5px;width:9.8px;height:9.8px;background:#fff;border:1px solid #d2d2d2"></div>
<svg class="a" style="left:603px;top:108.5px;" width="5" height="3" viewBox="0 0 5 3"><path d="M0 2.5 h4.5 l-2.25 -2.5z" fill="#555"/></svg>
<div class="a" style="left:600.5px;top:443px;width:9.8px;height:9.8px;background:#fff;border:1px solid #d2d2d2"></div>
<svg class="a" style="left:603px;top:446.5px;" width="5" height="3" viewBox="0 0 5 3"><path d="M0 0 h4.5 l-2.25 2.5z" fill="#555"/></svg>
<div class="a" style="left:600.5px;top:367.3px;width:9.5px;height:24.8px;background:#fff;border:1px solid #d6d6d6"></div>
<svg class="a" style="left:602.5px;top:455.5px;" width="6" height="7" viewBox="0 0 6 7"><path d="M0.5 3 L3 0.5 L5.5 3z M0.5 6.3 L3 3.8 L5.5 6.3z" fill="#666"/><rect x="0.5" y="3.4" width="5" height="0.8" fill="#666"/></svg>
<svg class="a" style="left:602.5px;top:467px;" width="6" height="7" viewBox="0 0 6 7"><path d="M0.5 0.5 L3 3 L5.5 0.5z M0.5 3.8 L3 6.3 L5.5 3.8z" fill="#666"/><rect x="0.5" y="2.8" width="5" height="0.8" fill="#666"/></svg>
<div class="a" style="left:137px;top:177px;width:422px;height:238px;background:#fff;box-shadow:0 0 1.5px 0.5px rgba(0,0,0,0.12)"></div>
<svg class="a" style="left:214.1px;top:263.5px;" width="75.9" height="60.89999999999998" viewBox="0 0 75.9 60.89999999999998"><defs><linearGradient id="gr" x1="0" x2="1" y1="0" y2="0"><stop offset="0" stop-color="#c6000f"/><stop offset="0.3" stop-color="#c8020f"/><stop offset="0.55" stop-color="#ae0010"/><stop offset="0.75" stop-color="#8e081c"/><stop offset="0.88" stop-color="#7e0a20"/><stop offset="0.95" stop-color="#b81030"/><stop offset="1" stop-color="#d02040"/></linearGradient></defs>
<path d="M0 10.6 V50.299999999999976 A37.95 10.6 0 0 0 75.9 50.299999999999976 V10.6z" fill="url(#gr)"/>
<ellipse cx="37.95" cy="10.6" rx="37.95" ry="10.6" fill="#c6000f"/>
<path d="M0 10.6 A37.95 10.6 0 0 0 75.9 10.6" fill="none" stroke="#900010" stroke-width="0.8" stroke-opacity="0.5"/></svg>
<svg class="a" style="left:310.5px;top:220.8px;" width="74.10000000000002" height="61.69999999999999" viewBox="0 0 74.10000000000002 61.69999999999999"><defs><linearGradient id="gb" x1="0" x2="1" y1="0" y2="0"><stop offset="0" stop-color="#3a5ba6"/><stop offset="0.35" stop-color="#3759a3"/><stop offset="0.6" stop-color="#304e92"/><stop offset="0.8" stop-color="#2c4688"/><stop offset="0.92" stop-color="#3d5ca3"/><stop offset="1" stop-color="#5575bb"/></linearGradient></defs>
<path d="M0 11.2 V50.499999999999986 A37.05000000000001 11.2 0 0 0 74.10000000000002 50.499999999999986 V11.2z" fill="url(#gb)"/>
<ellipse cx="37.05000000000001" cy="11.2" rx="37.05000000000001" ry="11.2" fill="#3d60ac"/>
<path d="M0 11.2 A37.05000000000001 11.2 0 0 0 74.10000000000002 11.2" fill="none" stroke="#2a4a90" stroke-width="0.8" stroke-opacity="0.5"/></svg>
<svg class="a" style="left:411px;top:263.9px;" width="75.69999999999999" height="60.5" viewBox="0 0 75.69999999999999 60.5"><defs><linearGradient id="gg" x1="0" x2="1" y1="0" y2="0"><stop offset="0" stop-color="#5c9c42"/><stop offset="0.4" stop-color="#4f8e3a"/><stop offset="0.64" stop-color="#4a7f38"/><stop offset="0.86" stop-color="#4e7a3c"/><stop offset="0.96" stop-color="#70a858"/><stop offset="1" stop-color="#88bc6c"/></linearGradient></defs>
<path d="M0 11.4 V49.1 A37.849999999999994 11.4 0 0 0 75.69999999999999 49.1 V11.4z" fill="url(#gg)"/>
<ellipse cx="37.849999999999994" cy="11.4" rx="37.849999999999994" ry="11.4" fill="#67a84a"/>
<path d="M0 11.4 A37.849999999999994 11.4 0 0 0 75.69999999999999 11.4" fill="none" stroke="#4f8a3a" stroke-width="0.8" stroke-opacity="0.5"/></svg>
<svg class="a" style="left:313.3px;top:322px;" width="75.19999999999999" height="60.69999999999999" viewBox="0 0 75.19999999999999 60.69999999999999"><defs><linearGradient id="go" x1="0" x2="1" y1="0" y2="0"><stop offset="0" stop-color="#e07f3b"/><stop offset="0.45" stop-color="#df803c"/><stop offset="0.7" stop-color="#c46e36"/><stop offset="0.86" stop-color="#b36634"/><stop offset="0.97" stop-color="#dd8a50"/><stop offset="1" stop-color="#e89a60"/></linearGradient></defs>
<path d="M0 11.2 V49.499999999999986 A37.599999999999994 11.2 0 0 0 75.19999999999999 49.499999999999986 V11.2z" fill="url(#go)"/>
<ellipse cx="37.599999999999994" cy="11.2" rx="37.599999999999994" ry="11.2" fill="#ed8c45"/>
<path d="M0 11.2 A37.599999999999994 11.2 0 0 0 75.19999999999999 11.2" fill="none" stroke="#d07838" stroke-width="0.8" stroke-opacity="0.5"/></svg>
<div class="a" style="left:348px;top:104px;width:1px;height:117px;background:repeating-linear-gradient(to bottom,#b4b4b4 0 2px,transparent 2px 4px);opacity:0.8;background-position:0 0px"></div>
<div class="a" style="left:348px;top:221px;width:1px;height:61px;background:repeating-linear-gradient(to bottom,rgba(255,255,255,0.6) 0 2px,transparent 2px 4px);opacity:1;background-position:0 3px"></div>
<div class="a" style="left:348px;top:282px;width:1px;height:40px;background:repeating-linear-gradient(to bottom,#b4b4b4 0 2px,transparent 2px 4px);opacity:0.8;background-position:0 2px"></div>
<div class="a" style="left:348px;top:322px;width:1px;height:61px;background:repeating-linear-gradient(to bottom,rgba(255,255,255,0.6) 0 2px,transparent 2px 4px);opacity:1;background-position:0 2px"></div>
<div class="a" style="left:348px;top:383px;width:1px;height:108px;background:repeating-linear-gradient(to bottom,#b4b4b4 0 2px,transparent 2px 4px);opacity:0.8;background-position:0 1px"></div>
<div class="a" style="left:94px;top:296px;width:120px;height:1px;background:repeating-linear-gradient(to right,#b4b4b4 0 2px,transparent 2px 4px);opacity:0.8;background-position:0px 0"></div>
<div class="a" style="left:214px;top:296px;width:76px;height:1px;background:repeating-linear-gradient(to right,rgba(255,255,255,0.6) 0 2px,transparent 2px 4px);opacity:1;background-position:0px 0"></div>
<div class="a" style="left:290px;top:296px;width:121px;height:1px;background:repeating-linear-gradient(to right,#b4b4b4 0 2px,transparent 2px 4px);opacity:0.8;background-position:0px 0"></div>
<div class="a" style="left:411px;top:296px;width:76px;height:1px;background:repeating-linear-gradient(to right,rgba(255,255,255,0.6) 0 2px,transparent 2px 4px);opacity:1;background-position:3px 0"></div>
<div class="a" style="left:487px;top:296px;width:113px;height:1px;background:repeating-linear-gradient(to right,#b4b4b4 0 2px,transparent 2px 4px);opacity:0.8;background-position:3px 0"></div>
<div class="a" style="left:313px;top:296px;width:75.5px;height:74.5px;border:1px solid #b8b8b8"></div>
<div class="a" style="left:350.5px;top:279px;width:1px;height:17px;background:#b0b0b0"></div>
<svg class="a" style="left:309.3px;top:292.1px;" width="8.4" height="8.4" viewBox="0 0 8.4 8.4"><circle cx="4.2" cy="4.2" r="3.2" fill="#fff" stroke="#999" stroke-width="0.8"/></svg>
<svg class="a" style="left:309.3px;top:329.0px;" width="8.4" height="8.4" viewBox="0 0 8.4 8.4"><circle cx="4.2" cy="4.2" r="3.2" fill="#fff" stroke="#999" stroke-width="0.8"/></svg>
<svg class="a" style="left:309.3px;top:366.3px;" width="8.4" height="8.4" viewBox="0 0 8.4 8.4"><circle cx="4.2" cy="4.2" r="3.2" fill="#fff" stroke="#999" stroke-width="0.8"/></svg>
<svg class="a" style="left:384.3px;top:292.1px;" width="8.4" height="8.4" viewBox="0 0 8.4 8.4"><circle cx="4.2" cy="4.2" r="3.2" fill="#fff" stroke="#999" stroke-width="0.8"/></svg>
<svg class="a" style="left:384.3px;top:329.0px;" width="8.4" height="8.4" viewBox="0 0 8.4 8.4"><circle cx="4.2" cy="4.2" r="3.2" fill="#fff" stroke="#999" stroke-width="0.8"/></svg>
<svg class="a" style="left:384.3px;top:366.3px;" width="8.4" height="8.4" viewBox="0 0 8.4 8.4"><circle cx="4.2" cy="4.2" r="3.2" fill="#fff" stroke="#999" stroke-width="0.8"/></svg>
<svg class="a" style="left:346.6px;top:292.1px;" width="8.4" height="8.4" viewBox="0 0 8.4 8.4"><circle cx="4.2" cy="4.2" r="3.2" fill="#e8f0b8" stroke="#999" stroke-width="0.8"/></svg>
<svg class="a" style="left:346.6px;top:366.3px;" width="8.4" height="8.4" viewBox="0 0 8.4 8.4"><circle cx="4.2" cy="4.2" r="3.2" fill="#fff" stroke="#777" stroke-width="0.8"/></svg>
<svg class="a" style="left:343px;top:265px;" width="16" height="16" viewBox="0 0 16 16"><path d="M12 10 A5 5 0 1 1 11.5 4.2" fill="none" stroke="#666" stroke-width="3.4" stroke-opacity="0.7"/><path d="M12 10 A5 5 0 1 1 11.5 4.2" fill="none" stroke="#fff" stroke-width="1.9"/><path d="M10 9.5 L15 8.5 L13 13.5z" fill="#fff" stroke="#666" stroke-width="0.5"/></svg>
<div class="t" style="left:620.60px;top:118.2px;font-size:13.8px;color:#d27a70;transform:scaleX(0.958);transform-origin:0 0;">Format Shape</div>
<svg class="a" style="left:854.5px;top:117.5px;" width="7" height="4" viewBox="0 0 7 4"><path d="M0 0 h6.5 l-3.25 3.5z" fill="#555"/></svg>
<svg class="a" style="left:882px;top:116px;" width="7" height="7" viewBox="0 0 7 7"><path d="M0.6 0.6 L6.4 6.4 M6.4 0.6 L0.6 6.4" stroke="#555" stroke-width="1.2"/></svg>
<div class="t" style="left:623.80px;top:134.1px;font-size:7.8px;color:#c8423c;font-weight:bold;transform:scaleX(0.952);transform-origin:0 0;">Shape Options</div>
<div class="t" style="left:688.60px;top:134.0px;font-size:8px;color:#555;transform:scaleX(0.981);transform-origin:0 0;">Text Options</div>
<svg class="a" style="left:623px;top:152px;" width="17" height="16" viewBox="0 0 17 16"><g fill="none" stroke="#c9584a" stroke-width="1.1"><path d="M1 8.5 L7 2.5 L13 8.5 L7 14.5z"/><path d="M5.5 4 V0.8"/></g><path d="M12.5 8 Q16.5 9 15.5 13.5 L13.5 11z" fill="#b8302a"/><circle cx="5.5" cy="5" r="0.9" fill="#b8302a"/></svg>
<svg class="a" style="left:650.5px;top:152px;" width="16" height="16" viewBox="0 0 16 16"><path d="M8 0.8 L14.5 5.5 L12 12.8 H4 L1.5 5.5z" fill="#fafafa" stroke="#777" stroke-width="0.9"/><path d="M4 12.8 H12" stroke="#666" stroke-width="1.2"/><path d="M4.5 14.5 H11.5" stroke="#ccc" stroke-width="0.8"/></svg>
<svg class="a" style="left:676px;top:152px;" width="17" height="16" viewBox="0 0 17 16"><g stroke="#888" stroke-width="0.8" fill="none"><path d="M5 2 H15 M5 0.8 v2.4 M15 0.8 v2.4 M2.2 5 V15 M1 5 h2.4 M1 15 h2.4"/></g><rect x="5" y="5" width="10" height="10" fill="#7a7a7a"/><g fill="#f4f4f4"><path d="M10 6.5 L11.3 8 H8.7z M10 13.5 L11.3 12 H8.7z M6.5 10 L8 8.7 V11.3z M13.5 10 L12 8.7 V11.3z"/><rect x="9.4" y="8" width="1.2" height="4"/><rect x="8" y="9.4" width="4" height="1.2"/></g></svg>
<div class="a" style="left:621.5px;top:179px;width:270.5px;height:1px;background:#d6d6d6"></div>
<svg class="a" style="left:627px;top:175px;" width="10" height="5" viewBox="0 0 10 5"><path d="M0 4.5 L4.5 0.5 L9 4.5" fill="#f0f0f0" stroke="#d6d6d6" stroke-width="0.9"/></svg>
<svg class="a" style="left:626px;top:187px;" width="5" height="5" viewBox="0 0 5 5"><path d="M4.5 0.5 V4.5 H0.5z" fill="#333"/></svg>
<div class="t" style="left:635.00px;top:185.2px;font-size:8px;color:#c8423c;font-weight:bold;transform:scaleX(0.822);transform-origin:0 0;">Fill</div>
<svg class="a" style="left:634.6px;top:204.6px;" width="9" height="9" viewBox="0 0 9 9"><circle cx="4.5" cy="4.5" r="3.7" fill="#fff" stroke="#d4d4d4" stroke-width="0.7"/></svg>
<div class="t" style="left:646.60px;top:205.2px;font-size:8px;color:#333;transform:scaleX(1.055);transform-origin:0 0;"><u>N</u>o fill</div>
<svg class="a" style="left:634.6px;top:219.01999999999998px;" width="9" height="9" viewBox="0 0 9 9"><circle cx="4.5" cy="4.5" r="3.7" fill="#fff" stroke="#d4d4d4" stroke-width="0.7"/><circle cx="4.5" cy="4.5" r="1.6" fill="#777"/></svg>
<div class="t" style="left:646.60px;top:219.6px;font-size:8px;color:#333;transform:scaleX(1.009);transform-origin:0 0;"><u>S</u>olid fill</div>
<svg class="a" style="left:634.6px;top:233.44px;" width="9" height="9" viewBox="0 0 9 9"><circle cx="4.5" cy="4.5" r="3.7" fill="#fff" stroke="#d4d4d4" stroke-width="0.7"/></svg>
<div class="t" style="left:646.60px;top:234.0px;font-size:8px;color:#333;transform:scaleX(0.994);transform-origin:0 0;"><u>G</u>radient fill</div>
<svg class="a" style="left:634.6px;top:247.85999999999999px;" width="9" height="9" viewBox="0 0 9 9"><circle cx="4.5" cy="4.5" r="3.7" fill="#fff" stroke="#d4d4d4" stroke-width="0.7"/></svg>
<div class="t" style="left:646.60px;top:248.5px;font-size:8px;color:#333;transform:scaleX(0.989);transform-origin:0 0;"><u>P</u>icture or texture fill</div>
<svg class="a" style="left:634.6px;top:262.28px;" width="9" height="9" viewBox="0 0 9 9"><circle cx="4.5" cy="4.5" r="3.7" fill="#fff" stroke="#d4d4d4" stroke-width="0.7"/></svg>
<div class="t" style="left:646.60px;top:262.9px;font-size:8px;color:#333;transform:scaleX(1.003);transform-origin:0 0;">P<u>a</u>ttern fill</div>
<svg class="a" style="left:634.6px;top:276.7px;" width="9" height="9" viewBox="0 0 9 9"><circle cx="4.5" cy="4.5" r="3.7" fill="#fff" stroke="#d4d4d4" stroke-width="0.7"/></svg>
<div class="t" style="left:646.60px;top:277.3px;font-size:8px;color:#333;transform:scaleX(0.997);transform-origin:0 0;">Slide <u>b</u>ackground fill</div>
<div class="t" style="left:641.60px;top:302.0px;font-size:8px;color:#333;transform:scaleX(0.978);transform-origin:0 0;"><u>C</u>olor</div>
<div class="a" style="left:850px;top:297.2px;width:28.5px;height:17.4px;background:#fff;border:1px solid #d4d4d4"></div>
<svg class="a" style="left:855px;top:299px;" width="13" height="12" viewBox="0 0 13 12"><path d="M2 5 L5 2 L9 6 L6 9z" fill="#fff" stroke="#666" stroke-width="0.8"/><path d="M9 6 q1.5 1 1 3" fill="none" stroke="#666" stroke-width="0.8"/><rect x="1.5" y="10" width="10" height="1.6" fill="#e07a30"/></svg>
<svg class="a" style="left:871px;top:304px;" width="5" height="3" viewBox="0 0 5 3"><path d="M0 0 h4.5 l-2.25 2.5z" fill="#555"/></svg>
<div class="t" style="left:641.60px;top:321.6px;font-size:8px;color:#333;transform:scaleX(0.950);transform-origin:0 0;"><u>T</u>ransparency</div>
<div class="a" style="left:695.5px;top:322px;width:1px;height:6px;background:#666"></div>
<div class="a" style="left:696px;top:325px;width:130.5px;height:1px;background:#c8c8c8"></div>
<div class="a" style="left:830.8px;top:318.9px;width:47.7px;height:13px;background:#fff;border:1px solid #d4d4d4"></div>
<div class="t" style="left:834.60px;top:321.3px;font-size:7.5px;color:#555;">0%</div>
<svg class="a" style="left:871.5px;top:320.5px;" width="4" height="10" viewBox="0 0 4 10"><path d="M0 3 h3.5 l-1.75 -2z M0 7 h3.5 l-1.75 2z" fill="#555"/></svg>
<svg class="a" style="left:626px;top:346px;" width="5" height="5" viewBox="0 0 5 5"><path d="M4.5 0.5 V4.5 H0.5z" fill="#333"/></svg>
<div class="t" style="left:635.20px;top:344.2px;font-size:8px;color:#c8423c;font-weight:bold;transform:scaleX(0.882);transform-origin:0 0;">Line</div>
<svg class="a" style="left:634.6px;top:362.9px;" width="9" height="9" viewBox="0 0 9 9"><circle cx="4.5" cy="4.5" r="3.7" fill="#fff" stroke="#d4d4d4" stroke-width="0.7"/><circle cx="4.5" cy="4.5" r="1.6" fill="#777"/></svg>
<div class="t" style="left:646.80px;top:363.5px;font-size:8px;color:#333;transform:scaleX(1.008);transform-origin:0 0;"><u>N</u>o line</div>
<svg class="a" style="left:634.6px;top:377.34999999999997px;" width="9" height="9" viewBox="0 0 9 9"><circle cx="4.5" cy="4.5" r="3.7" fill="#fff" stroke="#d4d4d4" stroke-width="0.7"/></svg>
<div class="t" style="left:646.80px;top:377.9px;font-size:8px;color:#333;transform:scaleX(0.977);transform-origin:0 0;"><u>S</u>olid line</div>
<svg class="a" style="left:634.6px;top:391.79999999999995px;" width="9" height="9" viewBox="0 0 9 9"><circle cx="4.5" cy="4.5" r="3.7" fill="#fff" stroke="#d4d4d4" stroke-width="0.7"/></svg>
<div class="t" style="left:646.80px;top:392.4px;font-size:8px;color:#333;transform:scaleX(0.968);transform-origin:0 0;"><u>G</u>radient line</div>
<div class="a" style="left:0;top:491px;width:900px;height:15px;background:#f1f1f1;border-top:1px solid #dcdcdc"></div>
<div class="a" style="left:0;top:504.5px;width:900px;height:1.5px;background:#555"></div>
<div class="t" style="left:4.70px;top:494.1px;font-size:7.5px;color:#555;transform:scaleX(1.000);transform-origin:0 0;">Slide 11 of 13</div>
<svg class="a" style="left:63px;top:493.5px;" width="10" height="9" viewBox="0 0 10 9"><g fill="none" stroke="#777" stroke-width="0.8"><path d="M0.5 0.5 H4.5 V8.5 H0.5z M4.5 0.5 H9.5 V5.5 L7 8.5 H4.5"/><path d="M6 3 h2"/></g></svg>
<div class="t" style="left:83.70px;top:494.1px;font-size:7.5px;color:#555;transform:scaleX(1.036);transform-origin:0 0;">Indonesian</div>
<svg class="a" style="left:624px;top:493px;" width="9" height="10" viewBox="0 0 9 10"><g stroke="#777" stroke-width="0.8"><path d="M1 4.5 h7 M1 6.5 h7 M2 8.5 h5"/></g><path d="M2.5 3 L4.5 1 L6.5 3z" fill="#777"/></svg>
<div class="t" style="left:635.00px;top:494.1px;font-size:7.5px;color:#555;transform:scaleX(0.995);transform-origin:0 0;">Notes</div>
<div class="a" style="left:668px;top:492px;width:23.6px;height:12.5px;background:#dcdcdc"></div>
<svg class="a" style="left:674.5px;top:493.5px;" width="10" height="9" viewBox="0 0 10 9"><g fill="none" stroke="#666" stroke-width="0.8"><rect x="0.5" y="0.5" width="9" height="8"/><path d="M3 0.5 V8.5 M5 2.5 h3 M5 4.5 h3 M5 6.5 h3"/></g></svg>
<svg class="a" style="left:700px;top:493.5px;" width="10" height="9" viewBox="0 0 10 9"><g fill="none" stroke="#777" stroke-width="0.8"><rect x="0.5" y="0.5" width="3.5" height="3"/><rect x="6" y="0.5" width="3.5" height="3"/><rect x="0.5" y="5.5" width="3.5" height="3"/><rect x="6" y="5.5" width="3.5" height="3"/></g></svg>
<svg class="a" style="left:725px;top:493.5px;" width="10" height="9" viewBox="0 0 10 9"><g fill="none" stroke="#777" stroke-width="0.8"><path d="M0.5 1 Q3 0 4.8 1.5 V8.5 Q3 7 0.5 8z M9.5 1 Q7 0 5.2 1.5 V8.5 Q7 7 9.5 8z"/></g></svg>
<svg class="a" style="left:750px;top:493.5px;" width="10" height="10" viewBox="0 0 10 10"><g fill="none" stroke="#777" stroke-width="0.8"><path d="M0.5 0.8 h9 M1.5 0.8 V5.5 H8.5 V0.8 M5 5.5 V8.5 M3 9.5 L5 7.5 L7 9.5"/></g></svg>
<div class="a" style="left:771.5px;top:497.8px;width:4px;height:1px;background:#555"></div>
<div class="a" style="left:777.7px;top:498px;width:65.3px;height:1px;background:#c4c4c4"></div>
<div class="a" style="left:793px;top:494.5px;width:2.3px;height:8px;background:#555"></div>
<div class="a" style="left:810.5px;top:496.5px;width:1px;height:3px;background:#c4c4c4"></div>
<svg class="a" style="left:845.5px;top:494.5px;" width="7" height="7" viewBox="0 0 7 7"><path d="M3.5 0.5 V6.5 M0.5 3.5 H6.5" stroke="#555" stroke-width="1"/></svg>
<div class="t" style="left:861.60px;top:494.1px;font-size:7.5px;color:#555;transform:scaleX(0.892);transform-origin:0 0;">51%</div>
<svg class="a" style="left:888px;top:493px;" width="10" height="10" viewBox="0 0 10 10"><g fill="none" stroke="#666" stroke-width="0.8"><rect x="0.5" y="0.5" width="9" height="9"/></g><g fill="#666"><path d="M1.5 1.5 h3 l-3 3z M8.5 1.5 v3 l-3 -3z M1.5 8.5 v-3 l3 3z M8.5 8.5 h-3 l3 -3z"/></g></svg>
<div class="t" style="left:191.5px;top:472px;font-size:20px;line-height:20px;color:#fff;opacity:0.35;font-weight:bold;transform:scaleX(1.2);transform-origin:0 0">dweb</div>
<svg class="a" style="left:7px;top:455px;" width="10" height="16" viewBox="0 0 10 16"><path d="M1 1 V13 L4 10.2 L6.3 15 L8.3 14 L6 9.5 H9.8z" fill="#fff" stroke="#555" stroke-width="0.9" stroke-linejoin="round"/></svg>
<div class="t" style="left:27px;top:439px;font-size:28px;line-height:30px;color:#111;font-family:'Liberation Serif',serif;font-weight:bold;font-style:italic;-webkit-text-stroke:0.7px #111;transform:scaleY(1.08);transform-origin:0 0">CokelatPanel</div>
<div class="t" style="left:6px;top:474.5px;font-size:16px;line-height:17px;color:#111;font-family:'Liberation Serif',serif;font-style:italic;-webkit-text-stroke:0.5px #111;transform:scaleX(1.0);transform-origin:0 0">bbm channel :</div>
<div class="t" style="left:104px;top:474.8px;font-size:16.8px;line-height:17px;color:#111;-webkit-text-stroke:0.5px #111;transform:scaleX(0.975);transform-origin:0 0">C002DA5F3</div>
</body></html>
